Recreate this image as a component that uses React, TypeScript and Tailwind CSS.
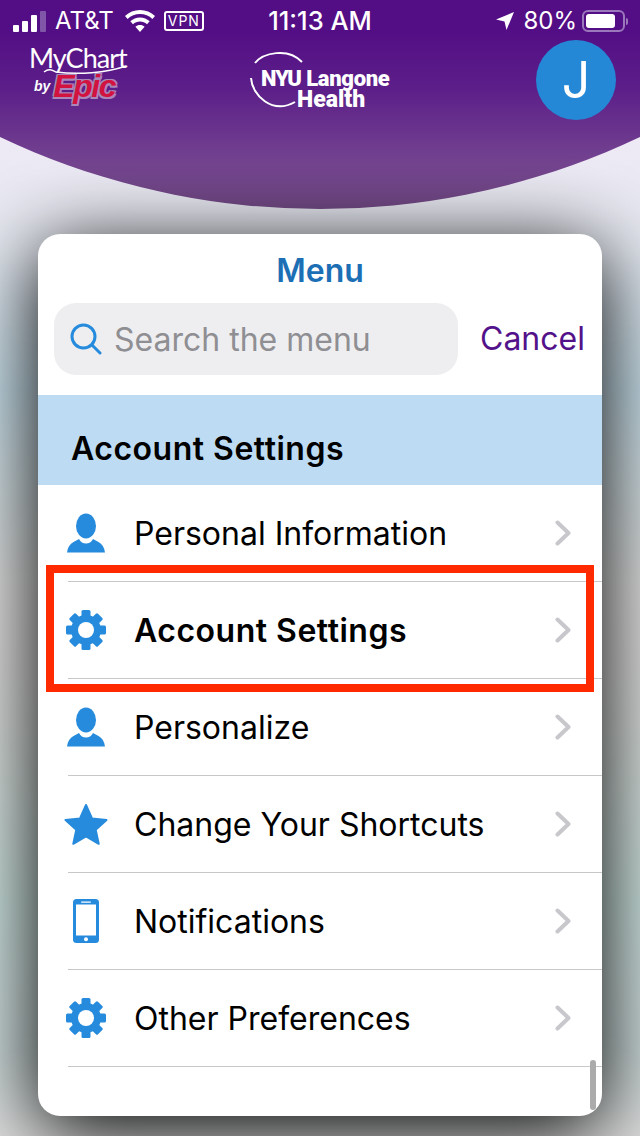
const rows = [
  { label: "Personal Information", icon: "person" },
  { label: "Account Settings", icon: "gear", bold: true },
  { label: "Personalize", icon: "person" },
  { label: "Change Your Shortcuts", icon: "star" },
  { label: "Notifications", icon: "phone" },
  { label: "Other Preferences", icon: "gear" },
];

function PersonIcon() {
  return (
    <svg width="40" height="40" viewBox="0 0 40 40" fill="#268bdc">
      <ellipse cx="20" cy="13" rx="10" ry="12.5" />
      <path d="M1 39.500c.6-5 3-8.600 6.500-10.500l5.500-3c1.500 3 4 4.500 7 4.500s5.500-1.500 7-4.500l5.500 3c3.500 1.900 5.900 5.500 6.500 10.500z" />
    </svg>
  );
}

function GearIcon() {
  const teeth = [0, 45, 90, 135];
  return (
    <svg width="40" height="40" viewBox="0 0 40 40">
      <circle cx="20" cy="20" r="15" fill="#268bdc" />
      {teeth.map((deg) => (
        <rect key={deg} x="15.500" y="0" width="9" height="40" rx="1.500" fill="#268bdc" transform={`rotate(${deg} 20 20)`} />
      ))}
      <circle cx="20" cy="20" r="8" fill="#fff" />
    </svg>
  );
}

function StarIcon() {
  return (
    <svg width="44" height="42" viewBox="0 0 44 42" fill="#268bdc" stroke="#268bdc" strokeWidth="2" strokeLinejoin="round">
      <path d="M22 2l6 13.500 14.500 1.500-10.800 9.800 3 14-12.700-7.300-12.700 7.300 3-14L1.500 17 16 15.500z" />
    </svg>
  );
}

function PhoneIcon() {
  return (
    <svg width="26" height="44" viewBox="0 0 26 44">
      <rect width="26" height="44" rx="3.500" fill="#268bdc" />
      <rect x="3" y="5.500" width="20" height="31" fill="#fff" />
      <rect x="8" y="2.500" width="10" height="1.200" rx=".6" fill="#fff" />
      <circle cx="13" cy="40.300" r="2" fill="#fff" />
    </svg>
  );
}

function RowIcon({ name }: { name: string }) {
  if (name === "person") return <PersonIcon />;
  if (name === "gear") return <GearIcon />;
  if (name === "star") return <StarIcon />;
  return <PhoneIcon />;
}

function Chevron() {
  return (
    <svg width="16" height="26" viewBox="0 0 16 26" fill="none" stroke="#c7c7cc" strokeWidth="4" strokeLinecap="round" strokeLinejoin="round">
      <path d="M2.500 2.500L13.500 13 2.500 23.500" />
    </svg>
  );
}

function StatusBar() {
  return (
    <div className="flex h-[40px] items-center justify-between pl-[13px] pr-[15px] pt-[2px] text-[24px] leading-none text-white">
      <div className="flex items-center">
        <div className="flex items-end gap-[3px] h-[21px]">
          <div className="h-[7px] w-[6px] rounded-[1px] bg-white" />
          <div className="h-[11px] w-[6px] rounded-[1px] bg-white" />
          <div className="h-[17px] w-[6px] rounded-[1px] bg-white" />
          <div className="h-[21px] w-[6px] rounded-[1px] bg-[#8057a8]" />
        </div>
        <span className="ml-[9px]">AT&amp;T</span>
        <svg className="ml-[11px]" width="30" height="22" viewBox="0 0 30 22" fill="#fff">
          <path d="M15 0c5.800 0 11 2.300 15 6l-2.600 2.900C24.100 5.800 19.800 4 15 4S5.900 5.800 2.600 8.900L0 6c4-3.700 9.200-6 15-6z" />
          <path d="M15 7.500c3.700 0 7 1.400 9.700 3.800l-2.700 2.900c-1.900-1.700-4.300-2.700-7-2.700s-5.100 1-7 2.700l-2.700-2.900C8 8.900 11.300 7.500 15 7.500z" />
          <path d="M15 15c1.800 0 3.400.7 4.600 1.700L15 22l-4.600-5.300c1.200-1 2.800-1.700 4.600-1.700z" />
        </svg>
        <div className="ml-[9px] flex h-[20px] w-[40px] items-center justify-center rounded-[3px] border-2 border-white text-[14px] tracking-[1px]">VPN</div>
      </div>
      <div className="absolute left-0 right-0 text-center text-[25.500px] font-medium">11:13 AM</div>
      <div className="flex items-center">
        <svg width="18" height="18" viewBox="0 0 18 18" fill="#fff">
          <path d="M18 0L10.500 18 8.500 9.500 0 7.500z" />
        </svg>
        <span className="ml-[9px]">80%</span>
        <div className="relative ml-[5px] flex h-[22px] w-[43px] items-center rounded-[6px] border-2 border-[#9a78bb] p-[2px]">
          <div className="h-full w-[29px] rounded-[3px] bg-white" />
          <div className="absolute -right-[5px] h-[7px] w-[2px] rounded-r-[2px] bg-[#9a78bb]" />
        </div>
      </div>
    </div>
  );
}

function Brand() {
  return (
    <div className="relative flex h-[80px] items-start justify-between pl-[29px] pr-[24px]">
      <div className="relative pt-[3px] text-white">
        <div className="text-[27px] leading-[29px] tracking-[-1px] font-['Lato',sans-serif]">MyChart</div>
        <svg className="absolute left-[14px] top-[24px]" width="84" height="12" viewBox="0 0 84 12" fill="none" stroke="#fff" strokeWidth="1.500">
          <path d="M1 8c5-4 8-2 12 0 22 3 50 1 70-6" />
        </svg>
        <div className="mt-[1px] flex items-center pl-[5px]">
          <span className="text-[14px] font-bold italic font-['Liberation_Sans',sans-serif]">by</span>
          <span className="ml-[3px] text-[32px] font-bold italic leading-[26px] tracking-[-1.500px] text-[#d2123f] [text-shadow:1.500px_1.500px_0_#a987b8,-1.500px_-1.500px_0_#a987b8,1.500px_-1.500px_0_#a987b8,-1.500px_1.500px_0_#a987b8] font-['Liberation_Sans',sans-serif]">Epic</span>
        </div>
      </div>
      <div className="absolute left-[250px] top-[10px] h-[60px] w-[142px] text-white font-['Roboto',sans-serif] font-black">
        <svg className="absolute left-0 top-0" width="56" height="60" viewBox="0 0 56 60" fill="none" stroke="#fff" strokeWidth="2">
          <path d="M5 13C13 3 38-3 52 12" />
          <path d="M1 28C2 45 22 65 45 52" />
        </svg>
        <div className="absolute left-[11px] top-[18px] flex items-baseline whitespace-nowrap leading-[22px]">
          <span className="text-[22px] tracking-[-.8px]">NYU</span>
          <span className="ml-[5px] text-[22px] tracking-[-.3px]">Langone</span>
        </div>
        <div className="absolute left-[47px] top-[40px] whitespace-nowrap text-[23px] leading-[20px]">Health</div>
      </div>
      <div className="flex h-[80px] w-[80px] items-center justify-center rounded-full bg-[#2488d6] text-[50px] text-white">J</div>
    </div>
  );
}

export default function App() {
  return (
    <div className="relative h-[1136px] w-[640px] overflow-hidden bg-[linear-gradient(to_bottom,#efeaf5_130px,#e4e8f0_250px,#c8dfea_390px,#d8e0e2_520px,#e0e0e0_590px,#dcdedd_700px,#cce2de_900px,#cfdcdc_1050px,#dedede_1136px)] font-['Inter',sans-serif]">
      <div className="absolute left-[-427px] top-[-1285px] h-[1494px] w-[1494px] rounded-full bg-[linear-gradient(to_top,#724a85_0px,#744490_45px,#5c1f89_120px,#530d85_180px)]" />
      <div className="relative">
        <StatusBar />
        <Brand />
      </div>

      <div className="relative ml-[38px] mt-[114px] h-[882px] w-[564px] rounded-[22px] bg-white shadow-[0_15px_80px_0_rgba(0,0,0,1)]">
        <div className="pt-[17px] text-center text-[32px] font-semibold leading-[40px] text-[#1c6fb5]">Menu</div>
        <div className="mt-[12px] flex items-center pl-[16px]">
          <div className="flex h-[72px] w-[404px] items-center rounded-[22px] bg-[#eeeef0] pl-[16px]">
            <svg width="32" height="32" viewBox="0 0 32 32" fill="none" stroke="#268bdc" strokeWidth="3" strokeLinecap="round">
              <circle cx="13.500" cy="13.500" r="11.500" />
              <path d="M22 22l8 8" />
            </svg>
            <span className="ml-[12px] pt-[1px] text-[32px] text-[#8e8e93]">Search the menu</span>
          </div>
          <span className="ml-[22px] text-[32px] text-[#53128a]">Cancel</span>
        </div>
        <div className="mt-[20px] flex h-[90px] items-center bg-[#bddbf2] pl-[33px] pt-[17px] text-[32px] font-semibold tracking-[.5px] text-black">Account Settings</div>
        <div className="pl-[30px]">
          {rows.map((row) => (
            <div key={row.label} className="flex h-[97px] items-center border-b border-[#c8c8c8]">
              <div className="flex w-[36px] justify-center">
                <div className="shrink-0">
                  <RowIcon name={row.icon} />
                </div>
              </div>
              <span className={`ml-[30px] flex-1 pt-[2px] text-[32px] text-black ${row.bold ? "font-semibold tracking-[.5px]" : ""}`}>{row.label}</span>
              <div className="mr-[31px] flex">
                <Chevron />
              </div>
            </div>
          ))}
        </div>
        <div className="absolute left-[8px] top-[331px] h-[127px] w-[548px] border-[8px] border-[#ff2a00]" />
        <div className="absolute right-[6px] top-[826px] h-[50px] w-[6px] rounded-full bg-[#ababab]" />
      </div>
    </div>
  );
}
